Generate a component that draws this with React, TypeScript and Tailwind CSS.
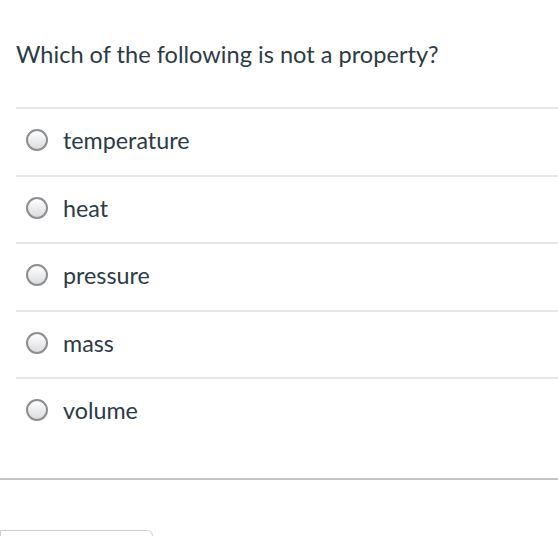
const OPTIONS = ["temperature", "heat", "pressure", "mass", "volume"];

function Radio() {
  return (
    <span className="inline-block w-[22px] h-[22px] shrink-0 rounded-full border-2 border-[#8b8f93] bg-gradient-to-b from-white to-[#dcdcdc]" />
  );
}

export default function App() {
  return (
    <div className="w-[558px] h-[536px] overflow-hidden bg-white text-[#2d3b45] font-['Lato','Liberation_Sans',sans-serif]">
      <div className="pt-[38px] pl-4 h-[107px]">
        <p className="text-[23.6px] leading-[32px]">Which of the following is not a property?</p>
      </div>
      <div className="ml-4">
        {OPTIONS.map((o) => (
          <div key={o} className="h-[67.5px] border-t-2 border-[#e6e6e6] flex items-start pt-[20px] pl-[10px] gap-[15px]">
            <Radio />
            <span className="text-[23.3px] leading-[22px]">{o}</span>
          </div>
        ))}
      </div>
      <div className="mt-[33px] border-t-2 border-[#c4c4c4]" />
      <div className="mt-[50px] w-[153px] h-[20px] border border-[#cfcfcf] rounded-tr-md" />
    </div>
  );
}
